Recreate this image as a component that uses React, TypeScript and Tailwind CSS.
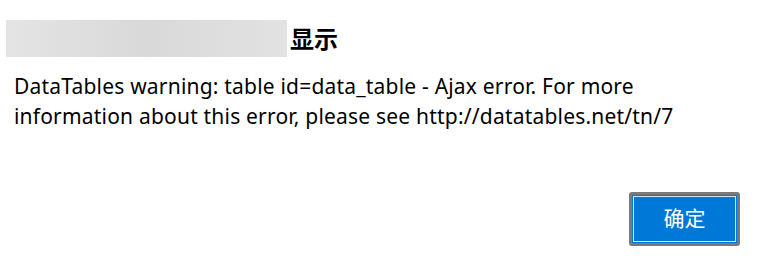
import React from 'react';

const App: React.FC = () => {
	return (
		<div
			className="relative flex h-[267px] w-[761px] flex-col bg-white text-black"
			style={{ fontFamily: '"Noto Sans", "Noto Sans CJK SC", sans-serif' }}
		>
			<div className="ml-[6px] mt-[20px] flex h-[37px] items-center">
				<div className="h-[37px] w-[281px] bg-gradient-to-r from-[#e4e4e4] via-[#d9d9d9] to-[#e2e2e2]"></div>
				<h2 className="ml-[3px] text-[24px] font-bold leading-none">显示</h2>
			</div>
			<p className="ml-[14px] mt-[14px] w-[680px] text-[21px] leading-[30px] tracking-[0.2px]">
				DataTables warning: table id=data_table - Ajax error. For more information about this error, please see http://datatables.net/tn/7
			</p>
			<div className="mt-auto mb-[21px] mr-[21px] flex justify-end">
				<button className="h-[54px] w-[111px] rounded-[3px] border-[3px] border-[#7a7a7a] bg-[#0078d7] p-[1px]">
					<span className="flex h-full w-full items-center justify-center border border-[#cfe6fa] text-[21px] text-white">
						确定
					</span>
				</button>
			</div>
		</div>
	);
};

export default App;
